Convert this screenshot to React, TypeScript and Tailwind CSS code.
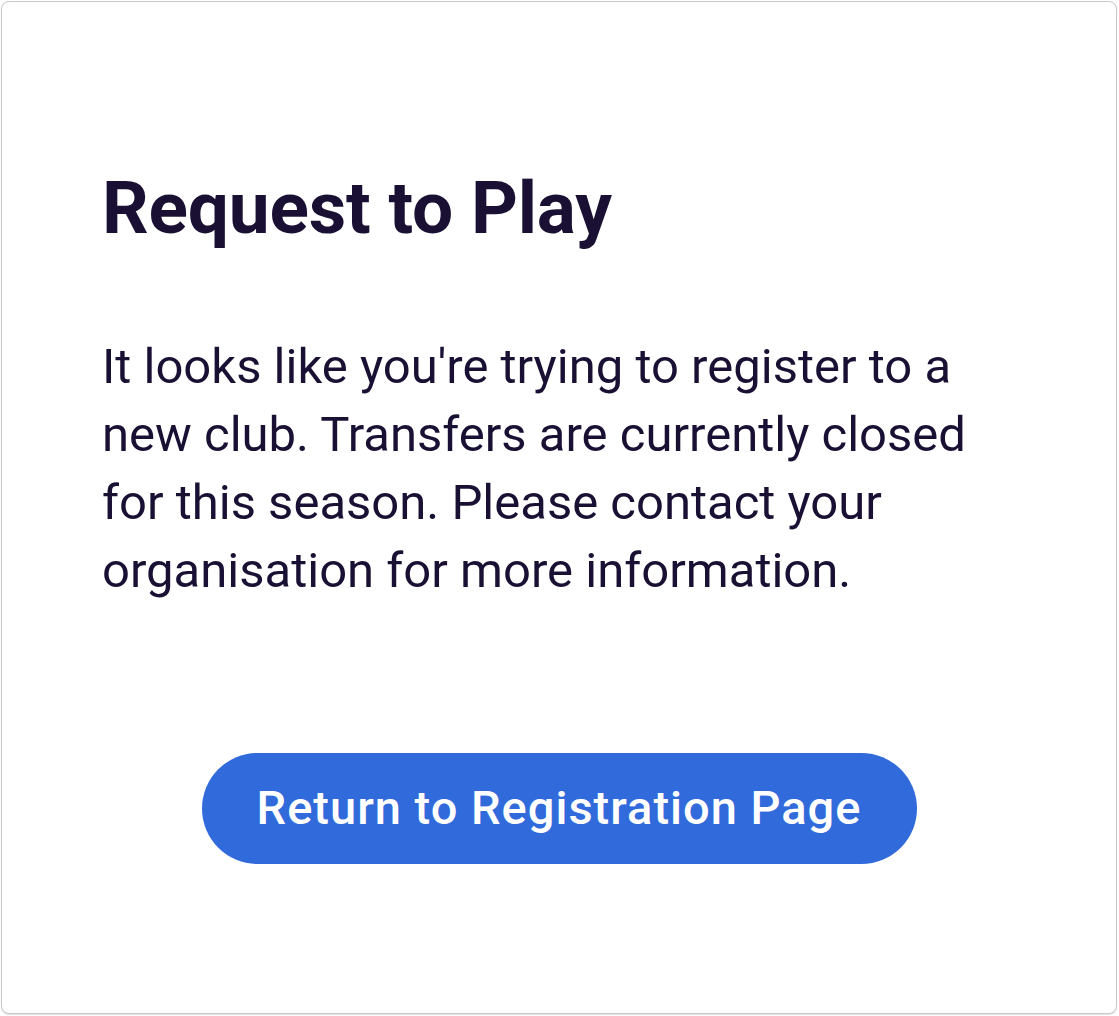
export default function App() {
  return (
    <div className="min-h-screen bg-white p-[1px]" style={{ fontFamily: 'Roboto, "Liberation Sans", sans-serif' }}>
      <div className="flex h-[1013px] w-[1116px] flex-col rounded-[8px] border border-[#c9c9c9] bg-white pl-[100px] pt-[166px] shadow-[0_1px_1px_rgba(0,0,0,0.12)]">
        <h1 className="text-[73px] font-bold leading-[80px] tracking-[-0.2px] text-[#1a1033]">Request to Play</h1>
        <p className="mt-[85px] text-[49px] font-normal leading-[68px] text-[#1a1033]">
          It looks like you're trying to register to a
          <br />
          new club. Transfers are currently closed
          <br />
          for this season. Please contact your
          <br />
          organisation for more information.
        </p>
        <div className="mt-[148px] flex justify-center pr-[100px]">
          <button className="flex h-[111px] w-[715px] items-center justify-center rounded-full bg-[#316bdb] text-[47px] font-medium tracking-[1px] text-white">
            Return to Registration Page
          </button>
        </div>
      </div>
    </div>
  );
}
